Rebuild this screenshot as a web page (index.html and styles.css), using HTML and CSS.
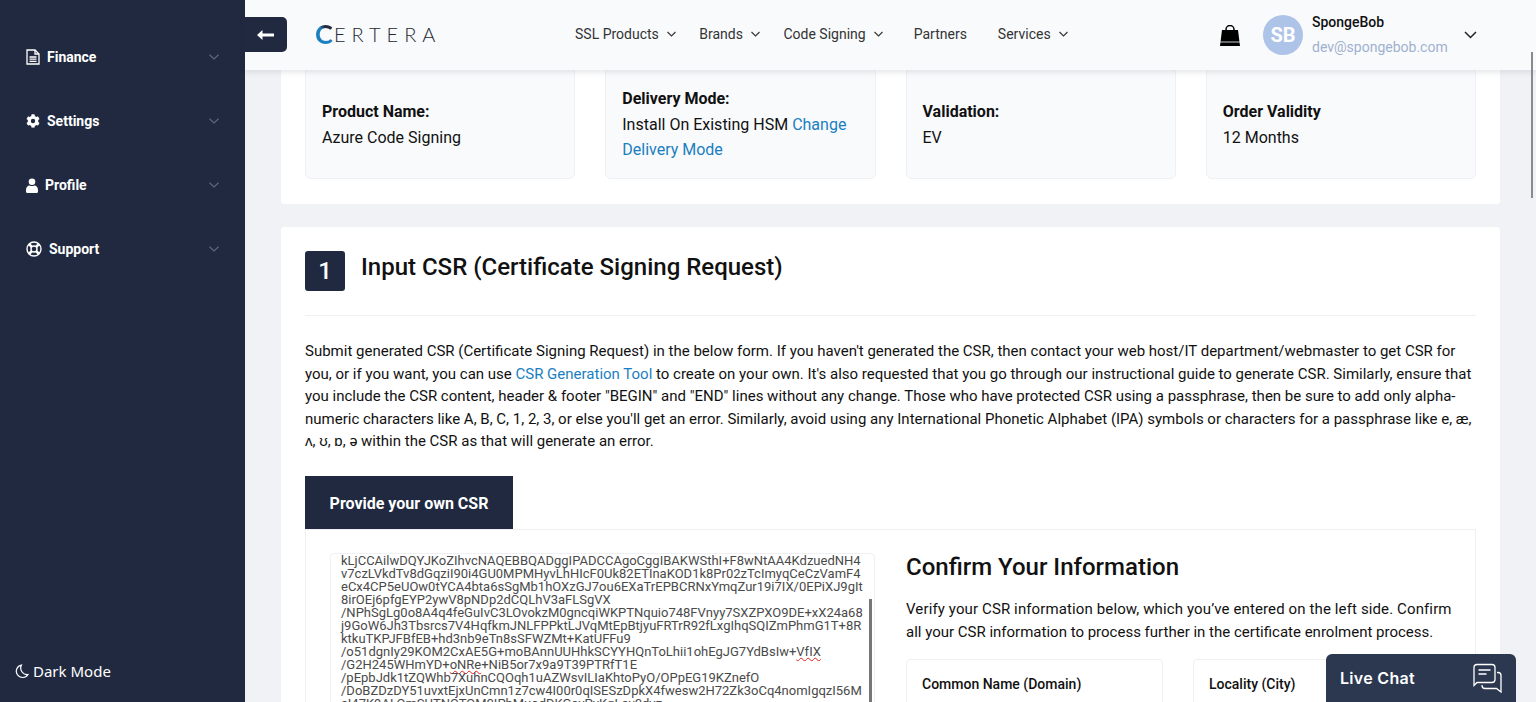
FILE: index.html
```html
<!DOCTYPE html>
<html lang="en">
<head>
<meta charset="UTF-8" />
<meta name="viewport" content="width=device-width, initial-scale=1" />
<title>Certera - Input CSR</title>
<link rel="stylesheet" href="styles.css">
</head>
<body>

<aside class="sidebar">
  <nav class="side-nav">
    <a class="side-item">
      <svg class="side-icon" width="14" height="16" viewBox="0 0 14 16" fill="none" stroke="#fff" stroke-width="1.3"><path d="M1 1h8l4 4v10H1z"/><path d="M9 1v4h4"/><path d="M3.5 8h7M3.5 10.2h7M3.5 12.4h7"/></svg>
      <span class="side-label">Finance</span>
      <svg class="side-caret" width="10" height="6" viewBox="0 0 10 6" fill="none" stroke="#5d6880" stroke-width="1.2"><path d="M.5 .7 5 5l4.5-4.300"/></svg>
    </a>
    <a class="side-item">
      <svg class="side-icon" width="14" height="14" viewBox="0 0 512 512" fill="#fff"><path d="M487 316l-42-25a190 190 0 0 0 0-70l42-25c5-3 7-9 5-14-11-35-30-67-54-93-4-4-10-5-15-2l-42 24a190 190 0 0 0-61-35V28c0-6-4-10-9-12-36-8-73-8-108 0-5 2-9 6-9 12v48a190 190 0 0 0-61 35L91 87c-5-3-11-2-15 2-24 26-43 58-54 93-2 5 0 11 5 14l42 25a190 190 0 0 0 0 70l-42 25c-5 3-7 9-5 14 11 35 30 67 54 93 4 4 10 5 15 2l42-24a190 190 0 0 0 61 35v48c0 6 4 10 9 12 36 8 73 8 108 0 5-2 9-6 9-12v-48a190 190 0 0 0 61-35l42 24c5 3 11 2 15-2 24-26 43-58 54-93 2-5 0-11-5-14zM256 336a80 80 0 1 1 0-160 80 80 0 0 1 0 160z"/></svg>
      <span class="side-label">Settings</span>
      <svg class="side-caret" width="10" height="6" viewBox="0 0 10 6" fill="none" stroke="#5d6880" stroke-width="1.2"><path d="M.5 .7 5 5l4.500-4.300"/></svg>
    </a>
    <a class="side-item">
      <svg class="side-icon" width="12" height="15" viewBox="0 0 12 15" fill="#fff"><circle cx="6" cy="3.700" r="3.300"/><path d="M0 12c0-3 1.800-4.600 3.500-4.600 1.600.9 3.400.9 5 0C10.200 7.400 12 9 12 12v1.500a1.500 1.500 0 0 1-1.500 1.500h-9A1.500 1.500 0 0 1 0 13.500z"/></svg>
      <span class="side-label">Profile</span>
      <svg class="side-caret" width="10" height="6" viewBox="0 0 10 6" fill="none" stroke="#5d6880" stroke-width="1.2"><path d="M.5 .7 5 5l4.500-4.300"/></svg>
    </a>
    <a class="side-item">
      <svg class="side-icon" width="16" height="16" viewBox="0 0 16 16" fill="none" stroke="#fff"><circle cx="8" cy="8" r="7" stroke-width="1.400"/><circle cx="8" cy="8" r="3" stroke-width="1.400"/><path d="M3 3l2.800 2.800M13 3l-2.800 2.800M3 13l2.800-2.800M13 13l-2.800-2.800" stroke-width="2.600"/></svg>
      <span class="side-label">Support</span>
      <svg class="side-caret" width="10" height="6" viewBox="0 0 10 6" fill="none" stroke="#5d6880" stroke-width="1.2"><path d="M.5 .7 5 5l4.500-4.300"/></svg>
    </a>
  </nav>
  <div class="dark-mode">
    <svg width="14" height="15" viewBox="0 0 14 15" fill="none" stroke="#fff" stroke-width="1.200"><path d="M6.500 1A6.300 6.300 0 1 0 13 10.500 6.500 6.500 0 0 1 6.500 1z"/></svg>
    <span>Dark Mode</span>
  </div>
</aside>

<div class="page">
  <header class="topbar">
    <button class="btn-back">
      <svg width="17" height="10" viewBox="0 0 17 10" fill="#fff"><path d="M5.500 0v3.500H17v3H5.500V10L0 5z"/></svg>
    </button>
    <div class="logo"><span class="logo-c">C</span>ERTERA</div>
    <nav class="top-nav">
      <a>SSL Products <svg width="9" height="6" viewBox="0 0 9 6" fill="none" stroke="#333" stroke-width="1.100"><path d="M.5 1 4.500 5l4-4"/></svg></a>
      <a>Brands <svg width="9" height="6" viewBox="0 0 9 6" fill="none" stroke="#333" stroke-width="1.100"><path d="M.5 1 4.500 5l4-4"/></svg></a>
      <a>Code Signing <svg width="9" height="6" viewBox="0 0 9 6" fill="none" stroke="#333" stroke-width="1.100"><path d="M.5 1 4.500 5l4-4"/></svg></a>
      <a class="nav-plain">Partners</a>
      <a>Services <svg width="9" height="6" viewBox="0 0 9 6" fill="none" stroke="#333" stroke-width="1.100"><path d="M.5 1 4.500 5l4-4"/></svg></a>
    </nav>
    <div class="user-area">
      <svg class="bag" width="20" height="21" viewBox="0 0 20 21"><path d="M2 5h16l2 16H0z" fill="#000"/><path d="M6 8V4.500a4 4 0 0 1 8 0V8" fill="none" stroke="#000" stroke-width="1.500"/><path d="M0 17h20" stroke="#fff" stroke-width=".8"/></svg>
      <div class="avatar">SB</div>
      <div class="user-text">
        <div class="user-name">SpongeBob</div>
        <div class="user-mail">dev@spongebob.com</div>
      </div>
      <svg class="user-caret" width="13" height="8" viewBox="0 0 13 8" fill="none" stroke="#222" stroke-width="1.500"><path d="M1 1l5.500 5.500L12 1"/></svg>
    </div>
  </header>

  <main class="content">
    <section class="card card-info">
      <div class="info-box">
        <div><b>Product Name:</b><br>Azure Code Signing</div>
      </div>
      <div class="info-box">
        <div><b>Delivery Mode:</b><br>Install On Existing HSM <a class="link">Change Delivery Mode</a></div>
      </div>
      <div class="info-box">
        <div><b>Validation:</b><br>EV</div>
      </div>
      <div class="info-box">
        <div><b>Order Validity</b><br>12 Months</div>
      </div>
    </section>

    <section class="card card-step">
      <div class="step-head">
        <div class="step-num">1</div>
        <h2>Input CSR (Certificate Signing Request)</h2>
      </div>
      <p class="step-text">Submit generated CSR (Certificate Signing Request) in the below form. If you haven't generated the CSR, then contact your web host/IT department/webmaster to get CSR for you, or if you want, you can use <a class="link">CSR Generation Tool</a> to create on your own. It's also requested that you go through our instructional guide to generate CSR. Similarly, ensure that you include the CSR content, header &amp; footer "BEGIN" and "END" lines without any change. Those who have protected CSR using a passphrase, then be sure to add only alpha-numeric characters like A, B, C, 1, 2, 3, or else you'll get an error. Similarly, avoid using any International Phonetic Alphabet (IPA) symbols or characters for a passphrase like e, æ, ʌ, ʊ, ɒ, ə within the CSR as that will generate an error.</p>

      <div class="tab">Provide your own CSR</div>
      <div class="tab-panel">
        <div class="csr-box">
<pre class="csr-text">kLjCCAilwDQYJKoZIhvcNAQEBBQADggIPADCCAgoCggIBAKWSthI+F8wNtAA4KdzuedNH4
v7czLVkdTv8dGqziI90i4GU0MPMHyvLhHIcF0Uk82ETInaKOD1k8Pr02zTcImyqCeCzVamF4
eCx4CP5eUOw0tYCA4bta6sSgMb1hOXzGJ7ou6EXaTrEPBCRNxYmqZur19i7IX/0EPiXJ9gIt
8irOEj6pfgEYP2ywV8pNDp2dCQLhV3aFLSgVX
/NPhSgLg0o8A4q4feGuIvC3LOvokzM0gncqiWKPTNquio748FVnyy7SXZPXO9DE+xX24a68
j9GoW6Jh3Tbsrcs7V4HqfkmJNLFPPktLJVqMtEpBtjyuFRTrR92fLxgIhqSQIZmPhmG1T+8R
ktkuTKPJFBfEB+hd3nb9eTn8sSFWZMt+KatUFFu9
/o51dgnIy29KOM2CxAE5G+moBAnnUUHhkSCYYHQnToLhii1ohEgJG7YdBsIw+<span class="typo">VfIX</span>
/G2H245WHmYD+<span class="typo">oNRe</span>+NiB5or7x9a9T39PTRfT1E
/pEpbJdk1tZQWhb7XuhnCQOqh1uAZWsvILIaKhtoPyO/OPpEG19KZnefO
/DoBZDzDY51uvxtEjxUnCmn1z7cw4I00r0qISESzDpkX4fwesw2H72Zk3oCq4nomIgqzI56M
cI47K9ALOmSUTNQTQM0IPhMuodDKGcvPvKqLav0dvz</pre>
          <div class="csr-scroll"></div>
        </div>
        <div class="confirm">
          <h3>Confirm Your Information</h3>
          <p><span class="confirm-lead">Verify your CSR information below, which you’ve entered on the left side. Confirm</span> all your CSR information to process further in the certificate enrolment process.</p>
          <div class="field-row">
            <div class="field field-wide">Common Name (Domain)</div>
            <div class="field">Locality (City)</div>
          </div>
        </div>
      </div>
    </section>
  </main>
</div>

<div class="page-scroll"></div>

<div class="live-chat">
  <span>Live Chat</span>
  <svg width="30" height="30" viewBox="0 0 30 30" fill="none" stroke="#fff" stroke-width="1.300"><path d="M2 4a3 3 0 0 1 3-3h15a3 3 0 0 1 3 3v12a3 3 0 0 1-3 3H5l-3 3z" transform="translate(0 .5)"/><path d="M6.500 7h12M6.500 11h8"/><path d="M25 9.500h1a3 3 0 0 1 3 3V29l-4.500-3.500H13a3 3 0 0 1-3-3v-.500"/></svg>
</div>

</body>
</html>
```
FILE: styles.css
```css
html, body {
  margin: 0;
  height: 100%;
  overflow: hidden;
}
body {
  display: flex;
  font-family: Roboto, "Liberation Sans", sans-serif;
  background: #f1f2f6;
  color: #111;
}
a {
  cursor: pointer;
}

/* sidebar */
.sidebar {
  width: 245px;
  flex-shrink: 0;
  background: #20293f;
  display: flex;
  flex-direction: column;
  justify-content: space-between;
  box-sizing: border-box;
  padding: 25px 0 21px;
  position: relative;
  z-index: 3;
}
.side-item {
  display: flex;
  align-items: center;
  height: 64px;
  padding: 0 26px;
  color: #fff;
  font-size: 14px;
  font-weight: 700;
}
.side-icon {
  flex-shrink: 0;
}
.side-label {
  flex: 1;
  margin-left: 7px;
}
.dark-mode {
  display: flex;
  align-items: center;
  gap: 4px;
  padding-left: 15px;
  color: #fff;
  font-family: "Noto Sans", sans-serif;
  font-size: 15px;
}

/* top bar */
.page {
  flex: 1;
  min-width: 0;
  display: flex;
  flex-direction: column;
}
.topbar {
  height: 70px;
  flex-shrink: 0;
  background: #f9fafc;
  box-shadow: 0 2px 6px rgba(30,40,60,0.12);
  display: flex;
  align-items: center;
  position: relative;
  z-index: 4;
}
.btn-back {
  position: absolute;
  left: -2px;
  top: 17px;
  width: 44px;
  height: 35px;
  border: none;
  padding: 0;
  background: #20293f;
  border-radius: 0 5px 5px 0;
  display: flex;
  align-items: center;
  justify-content: center;
}
.logo {
  margin-left: 70px;
  margin-bottom: 3px;
  width: 260px;
  font-family: Lato, sans-serif;
  font-size: 20px;
  font-weight: 300;
  letter-spacing: 6px;
  color: #222833;
}
.logo-c {
  font-size: 27px;
  font-weight: 700;
  letter-spacing: 1px;
  line-height: 1;
  vertical-align: -2px;
  background: linear-gradient(50deg, #1b7fc0 50%, #222b3c 62%);
  -webkit-background-clip: text;
  background-clip: text;
  color: transparent;
}
.top-nav {
  display: flex;
  margin-bottom: 2px;
  font-size: 14px;
  color: #333;
}
.top-nav a {
  display: inline-flex;
  align-items: center;
  gap: 8px;
  margin-right: 23.5px;
  white-space: nowrap;
}
.top-nav .nav-plain {
  margin-left: 7.5px;
  margin-right: 31px;
}
.user-area {
  margin-left: auto;
  margin-right: 59px;
  display: flex;
  align-items: center;
}
.bag {
  margin-right: 23px;
  margin-top: 1px;
}
.avatar {
  width: 40px;
  height: 40px;
  border-radius: 50%;
  background: #aec3e8;
  color: #fff;
  font-size: 20px;
  font-weight: 700;
  display: flex;
  align-items: center;
  justify-content: center;
}
.user-text {
  margin-left: 9px;
  width: 152px;
}
.user-name {
  font-size: 14px;
  font-weight: 500;
  color: #111;
  line-height: 17px;
  margin-bottom: 8px;
}
.user-mail {
  font-size: 14px;
  color: #9fb1cf;
  line-height: 17px;
}

/* content */
.content {
  flex: 1;
  min-height: 0;
  overflow: hidden;
  padding: 0 36px;
}
.card {
  background: #fff;
  border-radius: 3px;
  padding: 24px;
}
.card-info {
  margin-top: -27px;
  display: grid;
  grid-template-columns: repeat(4, 1fr);
  gap: 30px;
  padding-bottom: 25px;
}
.info-box {
  height: 112px;
  box-sizing: border-box;
  background: #f9fafc;
  border: 1px solid #eef0f4;
  border-radius: 6px;
  padding: 3px 16px 0;
  display: flex;
  align-items: center;
  font-size: 16px;
  line-height: 25.6px;
}
.info-box b {
  font-weight: 700;
}
.link {
  color: #1a7fc1;
}
.card-step {
  margin-top: 23px;
}
.step-head {
  display: flex;
  gap: 16px;
  padding-bottom: 24px;
  border-bottom: 1px solid #eef0f4;
}
.step-num {
  width: 40px;
  height: 40px;
  background: #20293f;
  color: #fff;
  border-radius: 3px;
  font-size: 24px;
  font-weight: 500;
  display: flex;
  align-items: center;
  justify-content: center;
}
.step-head h2 {
  margin: 0;
  font-size: 24px;
  font-weight: 500;
  line-height: 32px;
}
.step-text {
  margin: 24px 0 23px;
  font-size: 15px;
  line-height: 22.5px;
}
.tab {
  display: inline-block;
  width: 208px;
  height: 53px;
  box-sizing: border-box;
  background: #20293f;
  color: #fff;
  font-size: 16px;
  font-weight: 700;
  line-height: 55px;
  text-align: center;
  vertical-align: top;
}
.tab-panel {
  border: 1px solid #eef0f4;
  padding: 23px 0 23px 24px;
  display: flex;
  gap: 31px;
  align-items: flex-start;
}
.csr-box {
  width: 545px;
  height: 300px;
  flex-shrink: 0;
  box-sizing: border-box;
  border: 1px solid #eef0f4;
  border-radius: 4px;
  position: relative;
  overflow: hidden;
  padding: 0 0 0 10px;
}
.csr-text {
  margin: 0;
  font-family: Roboto, sans-serif;
  font-size: 13px;
  line-height: 13px;
  color: #4a4a4a;
}
.typo {
  text-decoration: underline wavy #e02020 1px;
}
.csr-scroll {
  position: absolute;
  right: 2px;
  top: 45px;
  bottom: 0;
  width: 3px;
  background: #777;
}
.confirm {
  flex: 1;
  min-width: 0;
}
.confirm h3 {
  margin: 0;
  font-size: 24px;
  font-weight: 500;
  line-height: 28px;
}
.confirm p {
  margin: 17px 0 15px;
  max-width: 550px;
  font-size: 15px;
  line-height: 23px;
}
.confirm-lead {
  letter-spacing: .12px;
}
.field-row {
  display: flex;
  gap: 30px;
}
.field {
  flex: 1;
  height: 120px;
  box-sizing: border-box;
  border: 1px solid #eef0f4;
  border-radius: 4px;
  padding: 16px 15px;
  font-size: 14px;
  font-weight: 500;
}
.field-wide {
  flex: 0 0 257px;
}

/* overlays */
.page-scroll {
  position: fixed;
  right: 3px;
  top: 52px;
  width: 2px;
  height: 146px;
  background: #8a8a8a;
  z-index: 5;
}
.live-chat {
  position: fixed;
  right: 20px;
  bottom: 0;
  width: 190px;
  height: 48px;
  box-sizing: border-box;
  padding: 0 14px;
  background: #2c3850;
  border-radius: 6px 6px 0 0;
  color: #fff;
  font-family: Inter, sans-serif;
  font-size: 16px;
  font-weight: 600;
  letter-spacing: .3px;
  display: flex;
  align-items: center;
  justify-content: space-between;
  z-index: 6;
}
```
